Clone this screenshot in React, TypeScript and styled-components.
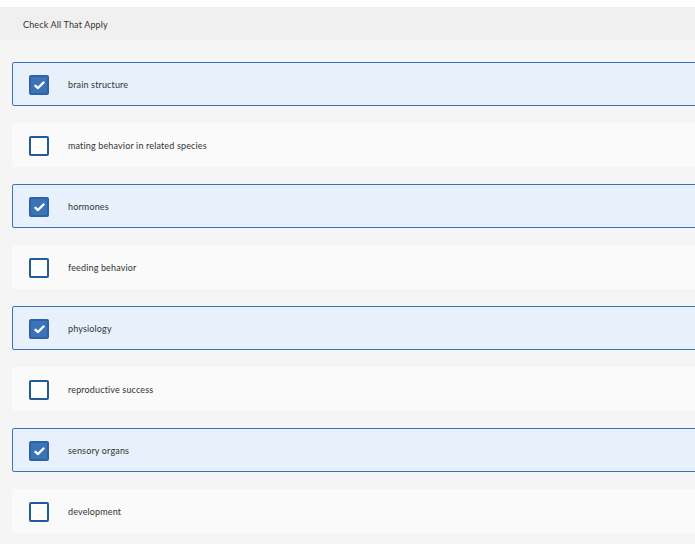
import styled, { createGlobalStyle } from 'styled-components';

const GlobalStyle = createGlobalStyle`
  html, body {
    margin: 0;
    padding: 0;
    background: #f5f5f5;
  }
  body {
    font-family: Lato, "Open Sans", Arial, sans-serif;
    color: #333333;
  }
`;

const Page = styled.div`
  padding-top: 7px;
  background: #ffffff;
  min-height: 544px;
  overflow: hidden;
`;

const Header = styled.div`
  height: 33px;
  display: flex;
  align-items: center;
  padding: 1px 0 0 23px;
  box-sizing: border-box;
  background: #f0f0f0;
  font-size: 9px;
  letter-spacing: 0.15px;
  color: #333333;
`;

const Body = styled.div`
  background: #f5f5f5;
  padding: 22px 0 12px 12px;
  display: flex;
  flex-direction: column;
  gap: 17px;
`;

const Row = styled.label<{ $checked: boolean }>`
  display: flex;
  align-items: center;
  height: 44px;
  box-sizing: border-box;
  margin-right: -10px;
  padding-left: 16px;
  background: ${({ $checked }) => ($checked ? '#e8f1fb' : '#fafafa')};
  border: 1px solid ${({ $checked }) => ($checked ? '#3a73b8' : 'transparent')};
  border-radius: 2px;
  cursor: pointer;
`;

const Box = styled.span<{ $checked: boolean }>`
  width: 20px;
  height: 20px;
  box-sizing: border-box;
  flex-shrink: 0;
  margin-top: 2px;
  border-radius: 2px;
  border: 2px solid ${({ $checked }) => ($checked ? '#2e62a3' : '#215b96')};
  background: ${({ $checked }) => ($checked ? '#3b73b9' : '#ffffff')};
  display: flex;
  align-items: center;
  justify-content: center;
`;

const Label = styled.span`
  margin-left: 19px;
  font-size: 9px;
  letter-spacing: 0.15px;
  color: #333333;
`;

const options = [
  { text: 'brain structure', checked: true },
  { text: 'mating behavior in related species', checked: false },
  { text: 'hormones', checked: true },
  { text: 'feeding behavior', checked: false },
  { text: 'physiology', checked: true },
  { text: 'reproductive success', checked: false },
  { text: 'sensory organs', checked: true },
  { text: 'development', checked: false },
];

function Check() {
  return (
    <svg width="11" height="9" viewBox="0 0 11 9">
      <path d="M1.5 4.8 L4 7 L9.5 1.5" fill="none" stroke="#ffffff" strokeWidth="2.4" strokeLinecap="round" strokeLinejoin="round" />
    </svg>
  );
}

export default function App() {
  return (
    <Page>
      <GlobalStyle />
      <Header>Check All That Apply</Header>
      <Body>
        {options.map((o) => (
          <Row key={o.text} $checked={o.checked}>
            <Box $checked={o.checked}>{o.checked && <Check />}</Box>
            <Label>{o.text}</Label>
          </Row>
        ))}
      </Body>
    </Page>
  );
}
